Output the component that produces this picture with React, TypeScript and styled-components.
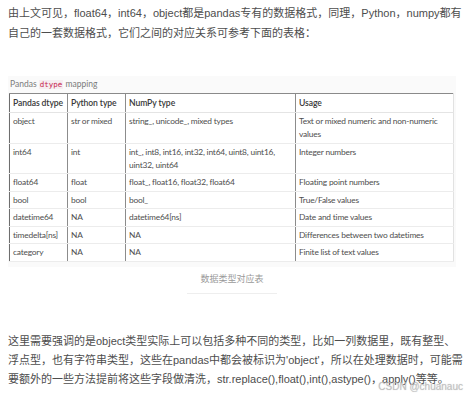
import React from 'react';
import styled, { createGlobalStyle } from 'styled-components';

const GlobalStyle = createGlobalStyle`
	html, body {
		margin: 0;
		padding: 0;
		background: #fff;
	}
`;

const Page = styled.div`
	position: relative;
	width: 474px;
	height: 395px;
	box-sizing: border-box;
	padding: 3px 18px 0 8px;
	overflow: hidden;
	font-family: 'Liberation Sans', 'Noto Sans CJK SC', sans-serif;
`;

const Paragraph = styled.p<{ $lh: number }>`
	margin: 0;
	font-size: 11px;
	line-height: ${(p) => p.$lh}px;
	color: #4d4d4d;
	white-space: nowrap;
`;

const Figure = styled.div`
	margin-top: 33px;
	background: #fafafa;
	padding: 0 2px 5px 1px;
`;

const TableTitle = styled.div`
	font-family: Lato, 'Liberation Sans', sans-serif;
	font-size: 8.5px;
	line-height: 17px;
	color: #7a7a7a;
	padding-left: 1px;
`;

const Code = styled.code`
	font-family: 'DejaVu Sans Mono', 'Liberation Mono', monospace;
	font-size: 7.5px;
	color: #c7254e;
	background: #f6eef1;
	padding: 0 1px;
`;

const Table = styled.table`
	width: 445px;
	border-collapse: collapse;
	table-layout: fixed;
	font-family: Lato, 'Liberation Sans', sans-serif;
	font-size: 8.4px;
	letter-spacing: -0.2px;
	color: #4e4e4e;
	background: #fff;
	border-top: 1px solid #8a8a8a;
	border-bottom: 1px solid #6e6e6e;
	border-left: 1px solid #6e6e6e;
	border-right: 1px solid #e2e2e2;
`;

const Head = styled.th`
	text-align: left;
	font-size: 8.6px;
	font-weight: 600;
	letter-spacing: -0.1px;
	color: #383838;
	line-height: 13px;
	white-space: nowrap;
	padding: 3px 2px 2px 3px;
	border-bottom: 1px solid #e4e4e4;
	border-right: 1px solid #8c8c8c;
	&:last-child {
		border-right: none;
	}
`;

const Cell = styled.td`
	vertical-align: top;
	line-height: 13px;
	padding: 2px 2px 1.5px 3px;
	border-bottom: 1px solid #ececec;
	border-right: 1px solid #8c8c8c;
	&:last-child {
		border-right: none;
	}
`;

const Caption = styled.div`
	width: 90px;
	margin: 5px auto 0;
	text-align: center;
	font-size: 9px;
	line-height: 14px;
	padding-bottom: 7px;
	color: #9a9a9a;
	border-bottom: 1px solid #eeeeee;
`;

const Spacer = styled.div`
	height: 38px;
`;

const Watermark = styled.div`
	position: absolute;
	right: 11px;
	bottom: 1px;
	font-size: 10px;
	line-height: 14px;
	color: rgba(190, 190, 190, 0.85);
	text-shadow: 0 0 1px rgba(120, 120, 120, 0.4);
`;

const rows: [string, string, React.ReactNode, string][] = [
	['object', 'str or mixed', 'string_, unicode_, mixed types', 'Text or mixed numeric and non-numeric values'],
	[
		'int64',
		'int',
		<>
			int_, int8, int16, int32, int64, uint8, uint16,
			<br />
			uint32, uint64
		</>,
		'Integer numbers'
	],
	['float64', 'float', 'float_, float16, float32, float64', 'Floating point numbers'],
	['bool', 'bool', 'bool_', 'True/False values'],
	['datetime64', 'NA', 'datetime64[ns]', 'Date and time values'],
	['timedelta[ns]', 'NA', 'NA', 'Differences between two datetimes'],
	['category', 'NA', 'NA', 'Finite list of text values']
];

export default function App() {
	return (
		<Page>
			<GlobalStyle />
			<Paragraph $lh={20}>
				由上文可见，float64，int64，object都是pandas专有的数据格式，同理，Python，numpy都有
				<br />
				自己的一套数据格式，它们之间的对应关系可参考下面的表格：
			</Paragraph>
			<Figure>
				<TableTitle>
					Pandas <Code>dtype</Code> mapping
				</TableTitle>
				<Table>
					<colgroup>
						<col style={{ width: 58 }} />
						<col style={{ width: 58 }} />
						<col style={{ width: 170 }} />
						<col />
					</colgroup>
					<thead>
						<tr>
							<Head>Pandas dtype</Head>
							<Head>Python type</Head>
							<Head>NumPy type</Head>
							<Head>Usage</Head>
						</tr>
					</thead>
					<tbody>
						{rows.map((r) => (
							<tr key={r[0]}>
								{r.map((c, i) => (
									<Cell key={i}>{c}</Cell>
								))}
							</tr>
						))}
					</tbody>
				</Table>
			</Figure>
			<Caption>数据类型对应表</Caption>
			<Spacer />
			<Paragraph $lh={19}>
				这里需要强调的是object类型实际上可以包括多种不同的类型，比如一列数据里，既有整型、
				<br />
				浮点型，也有字符串类型，这些在pandas中都会被标识为'object'，所以在处理数据时，可能需
				<br />
				要额外的一些方法提前将这些字段做清洗，str.replace(),float(),int(),astype()，apply()等等。
			</Paragraph>
			<Watermark>CSDN @chuanauc</Watermark>
		</Page>
	);
}
